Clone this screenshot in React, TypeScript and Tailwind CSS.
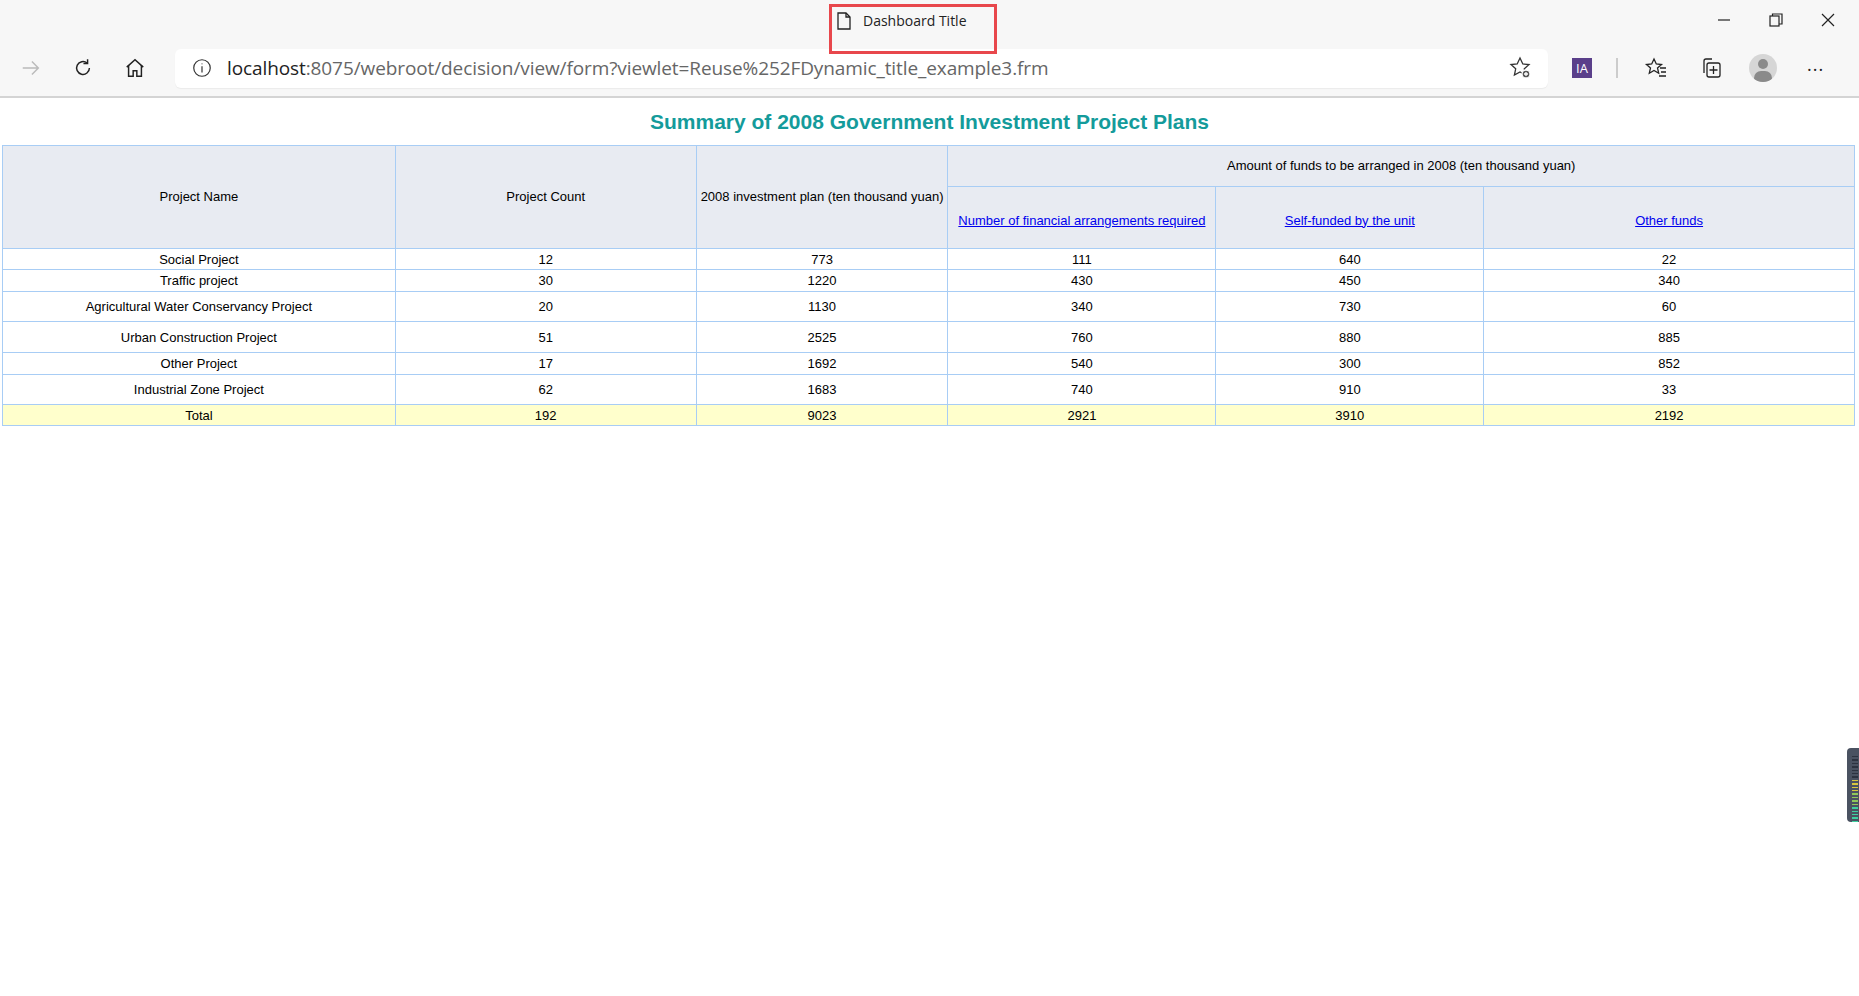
import React from "react";

const rows = [
  ["Social Project", "12", "773", "111", "640", "22", 21],
  ["Traffic project", "30", "1220", "430", "450", "340", 22],
  ["Agricultural Water Conservancy Project", "20", "1130", "340", "730", "60", 30],
  ["Urban Construction Project", "51", "2525", "760", "880", "885", 31],
  ["Other Project", "17", "1692", "540", "300", "852", 22],
  ["Industrial Zone Project", "62", "1683", "740", "910", "33", 30],
] as const;

const widths = [393, 301, 252, 268, 268, 371];

export default function App() {
  const bd = "border border-[#a8cdf5]";
  return (
    <div className="w-[1859px] h-[996px] bg-white relative overflow-hidden" style={{ fontFamily: '"Liberation Sans", Arial, sans-serif' }}>
      {/* browser chrome */}
      <div className="bg-[#f7f7f7] h-[98px] border-b-2 border-[#d4d4d4] flex flex-col" style={{ fontFamily: '"Open Sans", "Noto Sans", sans-serif' }}>
        <div className="h-[40px] flex items-center relative">
          <div className="absolute left-[829px] top-[4px] w-[168px] h-[50px] border-[3px] border-[#e8474c] z-10" />
          <div className="ml-[837px] flex items-center gap-[12px] text-[14px] text-[#222] mt-[1px]">
            <svg width="14" height="18" viewBox="0 0 14 18" fill="none" stroke="#222" strokeWidth="1.3"><path d="M1 1h8l4 4v12H1z" /><path d="M9 1v4h4" /></svg>
            <span>Dashboard Title</span>
          </div>
          <div className="ml-auto flex items-center gap-[38px] mr-[24px] text-[#222]">
            <svg width="14" height="14" viewBox="0 0 14 14" stroke="#222" strokeWidth="1.2"><path d="M1 7h12" /></svg>
            <svg width="14" height="14" viewBox="0 0 14 14" fill="none" stroke="#222" strokeWidth="1.2"><rect x="1" y="3" width="9" height="10" /><path d="M3.5 3V1H13v10h-3" /></svg>
            <svg width="14" height="14" viewBox="0 0 14 14" stroke="#222" strokeWidth="1.2"><path d="M1 1l12 12M13 1L1 13" /></svg>
          </div>
        </div>
        <div className="flex-1 flex items-center">
          <div className="w-[175px] flex items-center gap-[30px] pl-[20px]">
            <svg width="22" height="22" viewBox="0 0 24 24" fill="none" stroke="#bbb" strokeWidth="1.6"><path d="M3 12h17M13 5l7 7-7 7" /></svg>
            <svg width="22" height="22" viewBox="0 0 24 24" fill="none" stroke="#222" strokeWidth="1.6"><path d="M19 12a7 7 0 1 1-2.5-5.4" /><path d="M17 2.5v4.5h-4.5" /></svg>
            <svg width="22" height="22" viewBox="0 0 24 24" fill="none" stroke="#222" strokeWidth="1.6"><path d="M3 11l9-8 9 8" /><path d="M5 9v12h5v-6h4v6h5V9" /></svg>
          </div>
          <div className="w-[1373px] h-[39px] bg-white rounded-[6px] flex items-center px-[16px] shadow-[0_1px_1px_rgba(0,0,0,0.05)]">
            <svg width="22" height="22" viewBox="0 0 24 24" fill="none" stroke="#333" strokeWidth="1.3"><circle cx="12" cy="12" r="9" /><path d="M12 10v7M12 7v1" /></svg>
            <span className="ml-[14px] text-[19px] text-[#666] tracking-[-0.1px]"><span className="text-[#222]">localhost</span>:8075/webroot/decision/view/form?viewlet=Reuse%252FDynamic_title_example3.frm</span>
            <svg className="ml-auto" width="24" height="24" viewBox="0 0 24 24" fill="none" stroke="#333" strokeWidth="1.3"><path d="M12 2l2.8 6 6.2.6-4.7 4.2 1.3 6.2L12 16l-5.6 3 1.3-6.2L3 8.6 9.2 8z" /><circle cx="18" cy="18" r="4" fill="#555" stroke="#fff" /><path d="M18 16v4M16 18h4" stroke="#fff" /></svg>
          </div>
          <div className="flex items-center ml-[24px]">
            <div className="w-[20px] h-[20px] bg-[#5a3f8a] text-white text-[13px] flex items-center justify-center leading-none">IA</div>
            <div className="w-[2px] h-[20px] bg-[#ccc] ml-[24px]" />
            <svg className="ml-[26px]" width="24" height="24" viewBox="0 0 24 24" fill="none" stroke="#222" strokeWidth="1.3"><path d="M10 3l2.3 5 5.2.5-4 3.5 1.2 5.2L10 14.5 5.3 17.2l1.2-5.2-4-3.5 5.2-.5z" /><path d="M16 12h6M17 16h5M15 20h7" /></svg>
            <svg className="ml-[31px]" width="24" height="24" viewBox="0 0 24 24" fill="none" stroke="#222" strokeWidth="1.3"><path d="M5 17V5a2 2 0 0 1 2-2h6" /><rect x="8" y="7" width="13" height="14" rx="2" /><path d="M14.5 10v8M10.5 14h8" /></svg>
            <div className="ml-[26px] w-[28px] h-[28px] rounded-full bg-[#d6d6d6] overflow-hidden relative">
              <div className="absolute left-[9px] top-[5px] w-[10px] h-[10px] rounded-full bg-[#8a8a8a]" />
              <div className="absolute left-[5px] top-[17px] w-[18px] h-[14px] rounded-full bg-[#8a8a8a]" />
            </div>
            <span className="ml-[30px] text-[#222] text-[18px] tracking-[1px] -mt-[8px]">...</span>
          </div>
        </div>
      </div>

      {/* report */}
      <div className="text-center text-[#149b9b] font-bold text-[21px] h-[47px] flex items-center justify-center">Summary of 2008 Government Investment Project Plans</div>
      <table className="ml-[2px] border-collapse text-[13px] text-black" style={{ width: 1853 }}>
        <colgroup>{widths.map((w, i) => <col key={i} style={{ width: w }} />)}</colgroup>
        <tbody>
          <tr className="bg-[#e8ebf2]" style={{ height: 41 }}>
            <td rowSpan={2} className={`${bd} text-center`}>Project Name</td>
            <td rowSpan={2} className={`${bd} text-center`}>Project Count</td>
            <td rowSpan={2} className={`${bd} text-center`}>2008 investment plan (ten thousand yuan)</td>
            <td colSpan={3} className={`${bd} text-center`}>Amount of funds to be arranged in 2008 (ten thousand yuan)</td>
          </tr>
          <tr className="bg-[#e8ebf2]" style={{ height: 62 }}>
            {["Number of financial arrangements required", "Self-funded by the unit", "Other funds"].map((t) => (
              <td key={t} className={`${bd} text-center pt-[6px]`}><span className="text-[#0000ee] underline">{t}</span></td>
            ))}
          </tr>
          {rows.map((r) => (
            <tr key={r[0]} style={{ height: r[6] }}>
              {r.slice(0, 6).map((c, i) => <td key={i} className={`${bd} text-center leading-none`}>{c}</td>)}
            </tr>
          ))}
          <tr className="bg-[#ffffcc]" style={{ height: 21 }}>
            {["Total", "192", "9023", "2921", "3910", "2192"].map((c, i) => <td key={i} className={`${bd} text-center leading-none`}>{c}</td>)}
          </tr>
        </tbody>
      </table>

      {/* side widget */}
      <div className="absolute left-[1847px] top-[748px] w-[20px] h-[74px] rounded-[4px] bg-[#4a5261] flex flex-col items-start pl-[5px] pt-[8px] gap-[2px]">
        {Array.from({ length: 20 }).map((_, i) => (
          <div key={i} className="w-[6px] h-[1.5px]" style={{ background: i < 7 ? "#2d3340" : i < 11 ? "#d6c640" : i < 15 ? "#8fc75a" : "#3ecf9f" }} />
        ))}
      </div>
    </div>
  );
}
